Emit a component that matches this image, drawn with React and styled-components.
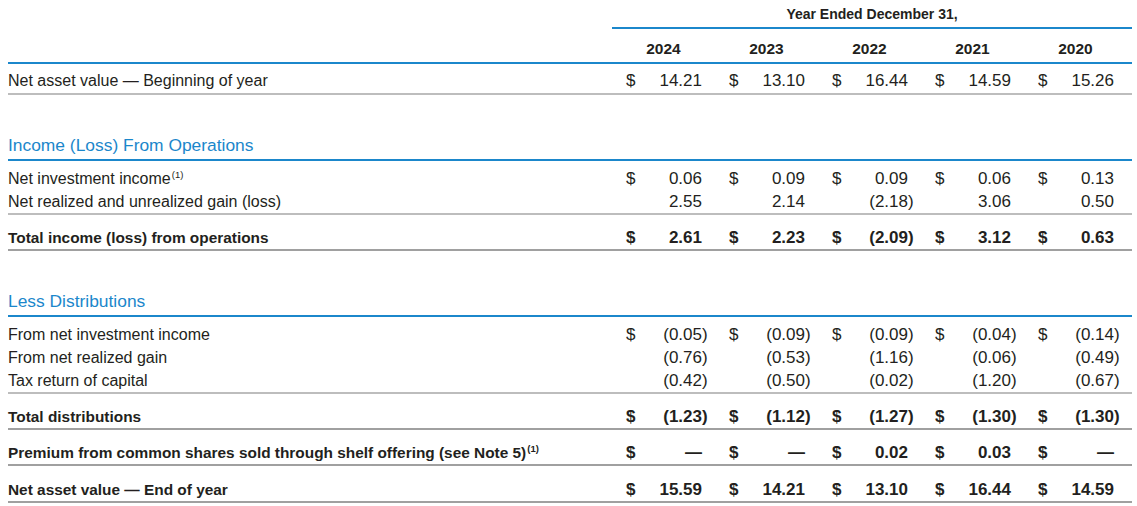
import React from "react";
import styled, { createGlobalStyle } from "styled-components";

const COLS = "1fr repeat(5, 103px) 5px";
const BLUE = "#1b87cb";
const INK = "#231f20";

const GlobalStyle = createGlobalStyle`
  body {
    margin: 0;
    background: #ffffff;
    color: ${INK};
    font-family: "Liberation Sans", Arial, sans-serif;
  }
`;

const years = ["2024", "2023", "2022", "2021", "2020"];

const sections = [
  {
    title: "Income (Loss) From Operations",
    rows: [
      {
        label: "Net investment income",
        note: true,
        dollar: true,
        values: ["0.06", "0.09", "0.09", "0.06", "0.13"],
      },
      {
        label: "Net realized and unrealized gain (loss)",
        values: ["2.55", "2.14", "(2.18)", "3.06", "0.50"],
      },
    ],
    totals: [
      {
        label: "Total income (loss) from operations",
        values: ["2.61", "2.23", "(2.09)", "3.12", "0.63"],
      },
    ],
  },
  {
    title: "Less Distributions",
    rows: [
      {
        label: "From net investment income",
        dollar: true,
        values: ["(0.05)", "(0.09)", "(0.09)", "(0.04)", "(0.14)"],
      },
      {
        label: "From net realized gain",
        values: ["(0.76)", "(0.53)", "(1.16)", "(0.06)", "(0.49)"],
      },
      {
        label: "Tax return of capital",
        values: ["(0.42)", "(0.50)", "(0.02)", "(1.20)", "(0.67)"],
      },
    ],
    totals: [
      {
        label: "Total distributions",
        values: ["(1.23)", "(1.12)", "(1.27)", "(1.30)", "(1.30)"],
      },
      {
        label: "Premium from common shares sold through shelf offering (see Note 5)",
        note: true,
        values: ["—", "—", "0.02", "0.03", "—"],
      },
      {
        label: "Net asset value — End of year",
        values: ["15.59", "14.21", "13.10", "16.44", "14.59"],
      },
    ],
  },
];

const Amount = ({ value, dollar, bold }) => {
  const neg = value.startsWith("(");
  return (
    <Cell $bold={bold}>
      <Dollar>{dollar ? "$" : ""}</Dollar>
      <Value>
        {neg ? value.slice(0, -1) : value}
        {neg && <Hang>)</Hang>}
      </Value>
    </Cell>
  );
};

const LineRow = ({ row, bold, dollar }) => (
  <Row>
    <Label $bold={bold}>
      {row.label}
      {row.note && <Sup>(1)</Sup>}
    </Label>
    {row.values.map((v, i) => (
      <Amount key={i} value={v} dollar={dollar || row.dollar} bold={bold} />
    ))}
    <span />
  </Row>
);

const App = () => {
  return (
    <Page>
      <GlobalStyle />
      <TitleRow>
        <span />
        <Title>Year Ended December 31,</Title>
      </TitleRow>
      <YearRow>
        <span />
        {years.map((y) => (
          <Year key={y}>{y}</Year>
        ))}
        <span />
      </YearRow>
      <Block $pt={5} $pb={1}>
        <LineRow
          row={{
            label: "Net asset value — Beginning of year",
            values: ["14.21", "13.10", "16.44", "14.59", "15.26"],
          }}
          dollar
        />
      </Block>

      {sections.map((s) => (
        <Section key={s.title}>
          <SectionTitle>{s.title}</SectionTitle>
          <Block $pt={6}>
            {s.rows.map((r) => (
              <LineRow key={r.label} row={r} />
            ))}
          </Block>
          {s.totals.map((t, ti) => (
            <Block key={t.label} $pt={ti === 2 ? 12 : 11} $total>
              <LineRow row={t} bold dollar />
            </Block>
          ))}
        </Section>
      ))}
    </Page>
  );
};

export default App;

const Page = styled.div`
  padding: 0 5px 0 8px;
  width: 1124px;
`;

const TitleRow = styled.div`
  display: grid;
  grid-template-columns: 604px 1fr;
`;

const Title = styled.div`
  height: 27px;
  line-height: 28px;
  text-align: center;
  font-size: 14px;
  font-weight: 700;
  border-bottom: 2px solid ${BLUE};
`;

const YearRow = styled.div`
  display: grid;
  grid-template-columns: ${COLS};
  padding-top: 7px;
  border-bottom: 2px solid ${BLUE};
`;

const Year = styled.div`
  line-height: 26px;
  text-align: center;
  font-size: 15.5px;
  font-weight: 700;
`;

const Block = styled.div`
  padding-top: ${(p) => p.$pt || 0}px;
  padding-bottom: ${(p) => p.$pb || 0}px;
  border-bottom: 2px solid ${(p) => (p.$total ? "#a0a0a0" : "#bdbdbd")};
`;

const Section = styled.div`
  margin-top: 38px;
`;

const SectionTitle = styled.div`
  font-size: 17.4px;
  line-height: 25px;
  padding-bottom: 1px;
  color: ${BLUE};
  border-bottom: 2px solid ${BLUE};
`;

const Row = styled.div`
  display: grid;
  grid-template-columns: ${COLS};
  line-height: 23px;
`;

const Label = styled.div`
  font-size: ${(p) => (p.$bold ? 15.4 : 16)}px;
  font-weight: ${(p) => (p.$bold ? 700 : 400)};
  white-space: nowrap;
`;

const Sup = styled.sup`
  font-size: 9.5px;
  line-height: 0;
  vertical-align: 6px;
  margin-left: 1px;
`;

const Cell = styled.div`
  display: flex;
  justify-content: space-between;
  padding: 0 13px 0 14px;
  font-size: 17px;
  font-weight: ${(p) => (p.$bold ? 700 : 400)};
`;

const Dollar = styled.span``;

const Value = styled.span`
  white-space: nowrap;
`;

const Hang = styled.span`
  margin-right: -0.333em;
`;
